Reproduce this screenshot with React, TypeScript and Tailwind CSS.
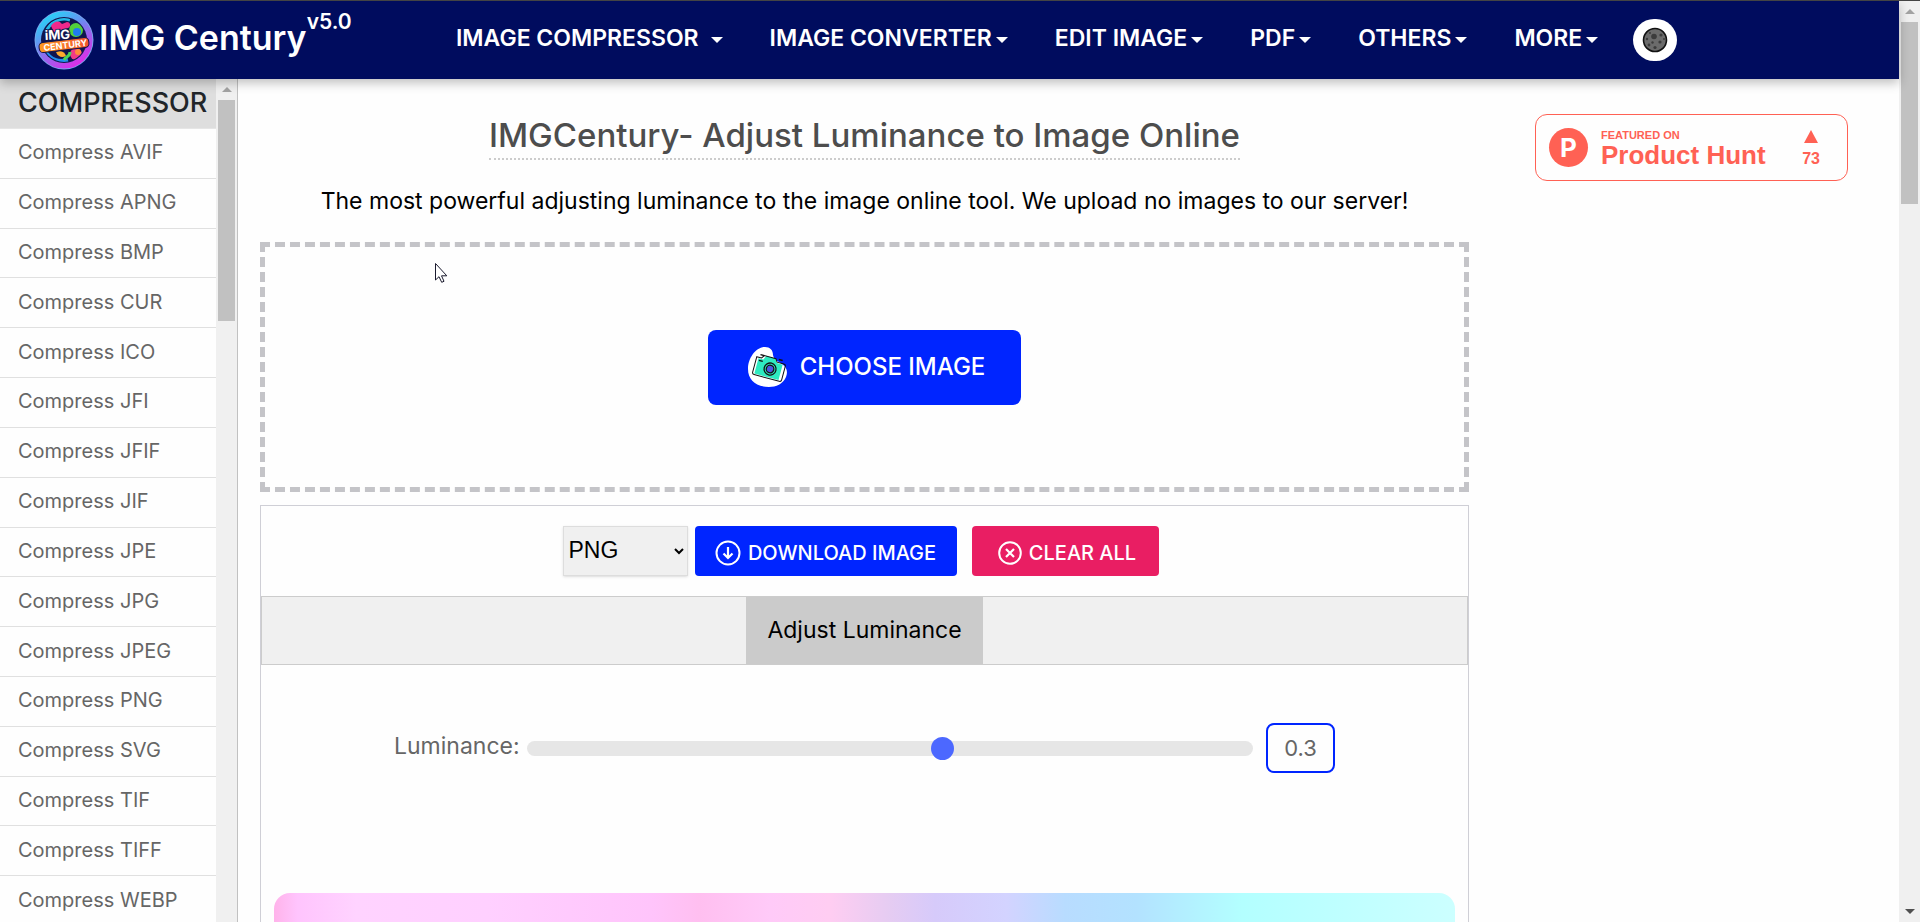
import React, { useState } from "react";

const formats = [
  "AVIF",
  "APNG",
  "BMP",
  "CUR",
  "ICO",
  "JFI",
  "JFIF",
  "JIF",
  "JPE",
  "JPG",
  "JPEG",
  "PNG",
  "SVG",
  "TIF",
  "TIFF",
  "WEBP",
];

const menus = [
  "IMAGE COMPRESSOR",
  "IMAGE CONVERTER",
  "EDIT IMAGE",
  "PDF",
  "OTHERS",
  "MORE",
];

const Logo = () => (
  <svg viewBox="0 0 60 60" className="size-15 shrink-0" aria-hidden="true">
    <defs>
      <linearGradient id="ring" x1="0.2" y1="0" x2="0.8" y2="1">
        <stop offset="0" stopColor="#27d3f7" />
        <stop offset="0.45" stopColor="#7a7df0" />
        <stop offset="1" stopColor="#e02be8" />
      </linearGradient>
      <linearGradient id="band" x1="0" x2="1">
        <stop offset="0" stopColor="#ff9b21" />
        <stop offset="1" stopColor="#f2542f" />
      </linearGradient>
      <clipPath id="disc">
        <circle cx="30" cy="30" r="22" />
      </clipPath>
    </defs>
    <circle cx="30" cy="30" r="29.5" fill="#7aa5ec" />
    <circle cx="30" cy="30" r="25.5" fill="none" stroke="url(#ring)" strokeWidth="6" />
    <circle cx="30" cy="30" r="23" fill="#10164f" />
    <g clipPath="url(#disc)">
      <path d="M12 22c4-10 14-15 24-12" fill="none" stroke="#22b8e6" strokeWidth="3" />
      <path d="M17 16c3-5 8-6 11-2l5-2c4 0 4 5 1 6l-14 4z" fill="#f0298c" />
      <circle cx="42" cy="20" r="7" fill="#52d13c" />
      <circle cx="43" cy="22" r="4" fill="#1f7bf0" />
      <path d="M10 40c8 12 16 12 24 10" fill="none" stroke="#1f8ff0" strokeWidth="4" />
      <path d="M22 42c5-2 9 0 10 4-4 2-8 1-10-4z" fill="#ffab2d" />
      <circle cx="42" cy="44" r="6" fill="#f23a86" />
      <circle cx="44" cy="42" r="3" fill="#ff8a3a" />
      <path d="M30 50c2-4 6-3 6-8" fill="none" stroke="#49d657" strokeWidth="3" />
    </g>
    <text
      x="11"
      y="30"
      fontSize="13"
      fontWeight="700"
      fill="#fff"
      stroke="#10164f"
      strokeWidth="2"
      paintOrder="stroke"
      transform="rotate(-3 11 30)"
    >
      iMG
    </text>
    <rect x="5" y="30" width="50" height="10" rx="4" fill="url(#band)" stroke="#10164f" transform="rotate(-7 30 35)" />
    <text x="10" y="41" fontSize="9" fontWeight="700" fill="#fff" transform="rotate(-7 10 41)">
      CENTURY
    </text>
  </svg>
);

const Caret = () => <span className="mt-1 border-x-6 border-t-6 border-x-transparent border-t-white" />;

const MoonIcon = () => (
  <svg viewBox="0 0 26 26" className="size-6.5" aria-hidden="true">
    <circle cx="13" cy="13" r="11.5" fill="#6b6b6b" stroke="#111" strokeWidth="1.6" />
    <g fill="#3c3c3c">
      <circle cx="12" cy="9.5" r="2.8" />
      <circle cx="18" cy="15" r="1.6" />
      <circle cx="10.5" cy="15.5" r="1.2" />
      <circle cx="7" cy="18" r="1.4" />
      <circle cx="13" cy="20.5" r="1.6" />
      <circle cx="19" cy="8" r="1.6" />
      <circle cx="5" cy="12" r="1.2" />
      <circle cx="8" cy="6" r="1" />
      <circle cx="22" cy="12" r="1" />
    </g>
  </svg>
);

const CameraIcon = () => (
  <svg viewBox="0 0 40 40" className="size-10" aria-hidden="true">
    <path
      d="M17 0c5 0 8 3 8 8 1 5 5 6 9 9 5 3 6 8 4 13-3 7-10 10-17 10C8 40 0 33 0 22 0 11 8 0 17 0z"
      fill="#fff"
    />
    <g transform="rotate(15 20 22)">
      <path d="M8 14h5l2-4h10l2 4h6v16H8z" fill="#2eeac0" />
      <path
        d="M6 13h5l2-3h12l2 3h7q2 0 2 2v14q0 2-2 2H8q-2 0-2-2z"
        fill="none"
        stroke="#111"
        strokeWidth="1"
      />
      <path d="M9 10h4M28 10h4" stroke="#111" strokeWidth="1.4" />
      <path d="M9 16h4" stroke="#111" strokeWidth="1.2" />
      <circle cx="22" cy="21.5" r="6" fill="#2eeac0" stroke="#111" strokeWidth="1.3" />
      <circle cx="22" cy="21.5" r="3.8" fill="#4d56e0" stroke="#111" strokeWidth="1.3" />
    </g>
  </svg>
);

const DownloadIcon = () => (
  <svg viewBox="0 0 26 26" className="size-6.5" fill="none" stroke="currentColor" strokeWidth="2" aria-hidden="true">
    <circle cx="13" cy="13" r="11.5" />
    <path d="M13 7v11M8.5 13.5 13 18l4.5-4.5" strokeWidth="2.2" />
  </svg>
);

const ClearIcon = () => (
  <svg viewBox="0 0 24 24" className="size-6" fill="none" stroke="currentColor" strokeWidth="2" aria-hidden="true">
    <circle cx="12" cy="12" r="10.8" />
    <path d="m8 8 8 8M16 8l-8 8" strokeWidth="2.2" />
  </svg>
);

const ArrowHead = ({ down = false, dark = false }: { down?: boolean; dark?: boolean }) => (
  <svg viewBox="0 0 10 5" className="h-[5px] w-[10px] shrink-0" aria-hidden="true">
    <path d={down ? "M0 0h10L5 5z" : "M5 0l5 5H0z"} fill={dark ? "#505050" : "#a3a3a3"} />
  </svg>
);

const Header = () => (
  <header className="relative z-10 flex h-[78px] shrink-0 items-center bg-[#000c5e] pl-[34px] text-white shadow-[0_4px_10px_rgba(0,0,0,0.25)]">
    <a href="#home" className="flex w-[422px] items-center gap-[5px]">
      <Logo />
      <span className="flex pb-1 text-[34px] leading-10 font-semibold">
        IMG Century
        <span className="-mt-2 text-[21px] leading-6 font-semibold">v5.0</span>
      </span>
    </a>
    <nav className="flex items-center gap-[47px] pb-1">
      {menus.map((menu, i) => (
        <button
          key={menu}
          className={`flex items-center whitespace-nowrap text-[23px] leading-6 font-semibold ${
            i === 0 ? "gap-3" : "gap-1"
          }`}
        >
          {menu}
          <Caret />
        </button>
      ))}
    </nav>
    <button
      aria-label="Dark mode"
      className="ml-[35px] flex h-[42px] w-11 items-center justify-center rounded-full bg-white"
    >
      <MoonIcon />
    </button>
  </header>
);

const Sidebar = () => (
  <aside className="flex w-[238px] shrink-0 overflow-hidden border-r border-[#c1c1c1]">
    <div className="flex-1">
      <h2 className="h-[50px] border-b border-[#e6e6e6] bg-[#dedede] pl-[18px] text-[27px] leading-12 font-medium text-[#212529]">
        COMPRESSOR
      </h2>
      <ul className="grid h-[797px] auto-rows-fr">
        {formats.map((format) => (
          <li key={format} className="flex items-center border-b border-[#e0e0e0] pb-0.5">
            <a href={`#${format.toLowerCase()}`} className="pl-[18px] text-[20px] leading-6 text-[#666]">
              Compress {format}
            </a>
          </li>
        ))}
      </ul>
    </div>
    <div className="flex w-[21px] flex-col items-center bg-[#f0f0f0] pt-2">
      <ArrowHead />
      <div className="mt-2 h-[221px] w-[17px] bg-[#c1c1c1]" />
    </div>
  </aside>
);

const ProductHunt = () => (
  <a
    href="#product-hunt"
    className="flex h-[67px] w-[313px] items-center rounded-xl border border-[#ff6154] pr-[27px] pl-[13px] font-['Liberation_Sans',sans-serif] font-bold text-[#ff6154]"
  >
    <span className="flex size-[39px] items-center justify-center rounded-full bg-[#ff6154] font-[Inter,sans-serif] text-[26px] leading-none text-white">
      P
    </span>
    <span className="ml-[13px] flex-1 pt-0.5">
      <span className="block text-[11px] leading-3">FEATURED ON</span>
      <span className="block text-[26px] leading-7">Product Hunt</span>
    </span>
    <span className="flex flex-col items-center gap-2 pt-px">
      <svg viewBox="0 0 14 13" className="h-[13px] w-[14px]" aria-hidden="true">
        <path d="M7 0l7 13H0z" fill="#ff6154" />
      </svg>
      <span className="text-base leading-4">73</span>
    </span>
  </a>
);

const Editor = () => {
  const [luminance, setLuminance] = useState(0.3);

  return (
    <section className="mt-[13px] border border-[#cfcfd6]">
      <div className="flex items-center justify-center py-5 pr-2">
        <select
          aria-label="Output format"
          defaultValue="PNG"
          className="h-[50px] w-[125px] border border-[#ddd] bg-[#f0f0f0] px-px pb-0.5 font-['Liberation_Sans',sans-serif] text-[23px] text-black shadow"
        >
          <option>PNG</option>
          <option>JPG</option>
          <option>WEBP</option>
        </select>
        <button className="ml-[7px] flex h-[50px] w-[262px] items-center justify-center gap-[7px] rounded-sm bg-[#0025ff] pt-1 text-[20px] font-medium text-white">
          <DownloadIcon />
          DOWNLOAD IMAGE
        </button>
        <button className="ml-[15px] flex h-[50px] w-[187px] items-center justify-center gap-[7px] rounded-sm bg-[#e91e63] pt-1 pl-1 text-[20px] font-medium text-white">
          <ClearIcon />
          CLEAR ALL
        </button>
      </div>
      <div className="flex justify-center border border-[#ccc] bg-[#f0f0f0]">
        <button className="h-[67px] bg-[#cbcbcb] px-[21px] text-[23px] text-black">Adjust Luminance</button>
      </div>
      <div className="mx-auto flex w-[941px] max-w-full items-center pt-[58px] text-[#666]">
        <label htmlFor="luminance" className="w-[133px] pb-1 text-[23px] leading-7">
          Luminance:
        </label>
        <input
          id="luminance"
          type="range"
          min={-2}
          max={2}
          step={0.1}
          value={luminance}
          onChange={(e) => setLuminance(Number(e.target.value))}
          className="h-[15px] min-w-0 flex-1 appearance-none rounded-full bg-[#e6e6e6] [&::-webkit-slider-thumb]:size-[23px] [&::-webkit-slider-thumb]:appearance-none [&::-webkit-slider-thumb]:rounded-full [&::-webkit-slider-thumb]:bg-[#4c68ff]"
        />
        <input
          aria-label="Luminance value"
          type="text"
          value={luminance}
          onChange={(e) => setLuminance(Number(e.target.value) || 0)}
          className="ml-[13px] h-[50px] w-[69px] rounded-lg border-2 border-[#0025ff] text-center text-[22px]"
        />
      </div>
      <div className="mx-[13px] mt-[120px] h-[600px] rounded-2xl bg-[linear-gradient(90deg,#ffb3ea_0%,#ffc4fd_2%,#ffd3ff_7%,#ffd0ff_18%,#ffc4fb_32%,#ffbff0_36%,#ffcaf8_42%,#ffcdf2_47%,#e6ccf2_52%,#d6cafa_56%,#d3d3ff_62%,#b8dcff_67%,#b3e2ff_73%,#b3ffff_82%,#ccffff_100%)]" />
    </section>
  );
};

const App = () => {
  return (
    <div className="relative flex h-screen overflow-hidden border-t border-[#444] bg-[#fefefe] font-[Inter,sans-serif]">
      <div className="flex min-w-0 flex-1 flex-col">
        <Header />
        <div className="flex min-h-0 flex-1">
          <Sidebar />
          <main className="flex min-w-0 flex-1 overflow-hidden">
            <div className="min-w-0 flex-1 pl-[22px]">
              <div className="flex flex-col items-center pt-9">
                <h1 className="border-b-2 border-dotted border-[#ccc] pb-[3px] text-[33px] leading-10 font-medium text-[#4d4d4d]">
                  IMGCentury- Adjust Luminance to Image Online
                </h1>
                <p className="mt-[25px] text-[23px] leading-8 text-black">
                  The most powerful adjusting luminance to the image online tool. We upload no images to our server!
                </p>
              </div>
              <div className="mt-[25px] flex h-[250px] items-center justify-center border-5 border-dashed border-[#c4c4c8]">
                <button className="flex h-[75px] w-[313px] items-center justify-center gap-3 rounded-lg bg-[#0025ff] pl-1 text-[24px] font-medium text-white">
                  <CameraIcon />
                  CHOOSE IMAGE
                </button>
              </div>
              <Editor />
            </div>
            <div className="flex w-[430px] shrink-0 items-start justify-center pt-[35px] pl-[15px]">
              <ProductHunt />
            </div>
          </main>
        </div>
      </div>
      <div className="flex w-[21px] shrink-0 flex-col items-center bg-[#f0f0f0] py-2">
        <ArrowHead />
        <div className="mt-2 h-[182px] w-[17px] bg-[#c1c1c1]" />
        <div className="mt-auto flex">
          <ArrowHead down dark />
        </div>
      </div>
      <svg viewBox="0 0 13 20" className="absolute top-[262px] left-[435px] h-5 w-[13px]" aria-hidden="true">
        <path d="M.5.5v16.5l3.5-3.3 2.7 5.6 2.3-1-2.5-5.5h5.300z" fill="#fff" stroke="#1a1a2e" />
      </svg>
    </div>
  );
};

export default App;
